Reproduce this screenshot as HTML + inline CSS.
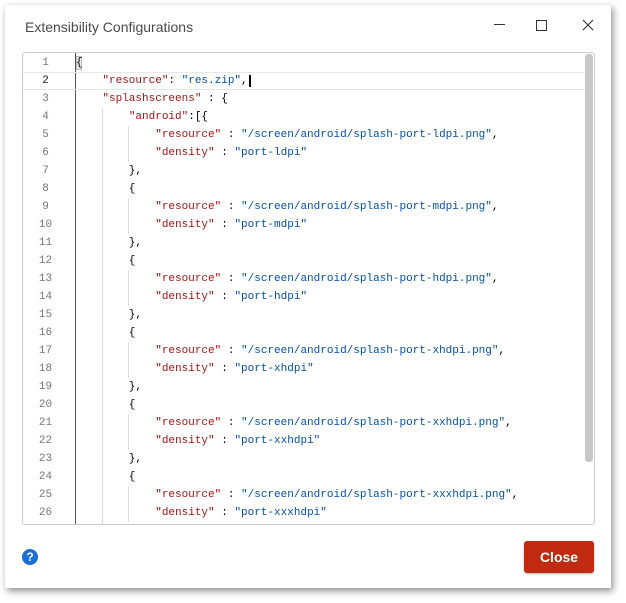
<!DOCTYPE html>
<html><head><style>
body{margin:0;width:626px;height:603px;background:#fff;overflow:hidden;font-family:"Liberation Sans",sans-serif;position:relative}
.dlg{position:absolute;left:5px;top:5px;width:606px;height:583px;background:#fff;box-shadow:2px 3px 7px rgba(0,0,0,.45)}
.title{position:absolute;left:20px;top:14px;font-size:14px;color:#4a4a4a}
.ed{position:absolute;left:22px;top:52px;width:571px;height:471px;border:1px solid #ccc;border-radius:3px;overflow:hidden}
.gut{position:absolute;left:0;top:0;width:52px;height:100%;border-right:1px solid #555}
.ln{position:absolute;left:0;width:45px;text-align:center;font:11px "Liberation Mono",monospace;color:#777;line-height:18px}
.code{position:absolute;left:53px;font:11px/18px "Liberation Mono",monospace;white-space:pre;color:#000}
.k{color:#a31515}.s{color:#0451a5}
.g{position:absolute;width:1px;background:#ddd}
.sb{position:absolute;left:562px;top:1px;width:8px;height:408px;background:#c8c8c8;border-radius:3px}
</style></head><body>
<div class="dlg">
<div class="title">Extensibility Configurations</div>
<svg style="position:absolute;left:480px;top:8px" width="120" height="24">
<line x1="9" y1="11.5" x2="20" y2="11.5" stroke="#333" stroke-width="1"/>
<rect x="51.5" y="7.5" width="10" height="10" fill="none" stroke="#333"/>
<path d="M98 7 L108 17 M108 7 L98 17" stroke="#333" stroke-width="1.1"/>
</svg>
<div class="ed" style="left:17px;top:47px">
<div class="gut"></div>
<div style="position:absolute;left:0;top:19px;width:562px;height:16px;border-top:1px solid #e8e8e8;border-bottom:1px solid #e8e8e8"></div>
<div class="g" style="left:79px;top:55px;height:420px"></div>
<div class="g" style="left:105px;top:73px;height:36px"></div>
<div class="g" style="left:105px;top:145px;height:36px"></div>
<div class="g" style="left:105px;top:217px;height:36px"></div>
<div class="g" style="left:105px;top:289px;height:36px"></div>
<div class="g" style="left:105px;top:361px;height:36px"></div>
<div class="g" style="left:105px;top:433px;height:36px"></div>
<div style="position:absolute;left:53px;top:3px;width:6px;height:14px;background:#e8e8e8;border:1px solid #bbb;box-sizing:border-box"></div>
<div class="ln" style="top:1px">1<br><span style="color:#222">2</span><br>3<br>4<br>5<br>6<br>7<br>8<br>9<br>10<br>11<br>12<br>13<br>14<br>15<br>16<br>17<br>18<br>19<br>20<br>21<br>22<br>23<br>24<br>25<br>26</div>
<div class="code" style="top:1px">{
    <span class="k">"resource"</span>: <span class="s">"res.zip"</span>,<span style="border-left:2px solid #000;margin-left:1px"></span>
    <span class="k">"splashscreens"</span> : {
        <span class="k">"android"</span>:[{
            <span class="k">"resource"</span> : <span class="s">"/screen/android/splash-port-ldpi.png"</span>,
            <span class="k">"density"</span> : <span class="s">"port-ldpi"</span>
        },
        {
            <span class="k">"resource"</span> : <span class="s">"/screen/android/splash-port-mdpi.png"</span>,
            <span class="k">"density"</span> : <span class="s">"port-mdpi"</span>
        },
        {
            <span class="k">"resource"</span> : <span class="s">"/screen/android/splash-port-hdpi.png"</span>,
            <span class="k">"density"</span> : <span class="s">"port-hdpi"</span>
        },
        {
            <span class="k">"resource"</span> : <span class="s">"/screen/android/splash-port-xhdpi.png"</span>,
            <span class="k">"density"</span> : <span class="s">"port-xhdpi"</span>
        },
        {
            <span class="k">"resource"</span> : <span class="s">"/screen/android/splash-port-xxhdpi.png"</span>,
            <span class="k">"density"</span> : <span class="s">"port-xxhdpi"</span>
        },
        {
            <span class="k">"resource"</span> : <span class="s">"/screen/android/splash-port-xxxhdpi.png"</span>,
            <span class="k">"density"</span> : <span class="s">"port-xxxhdpi"</span></div>
<div class="sb"></div>
</div>
<div style="position:absolute;left:17px;top:544px;width:16px;height:16px;border-radius:50%;background:#1a6fd6;color:#fff;font:bold 12px/16px 'Liberation Sans',sans-serif;text-align:center">?</div>
<div style="position:absolute;left:519px;top:536px;width:70px;height:32px;background:#c02a10;border-radius:3px;color:#fff;font:bold 14px/32px 'Liberation Sans',sans-serif;text-align:center;box-shadow:0 1px 2px rgba(0,0,0,.3)">Close</div>
</div>
</body></html>
